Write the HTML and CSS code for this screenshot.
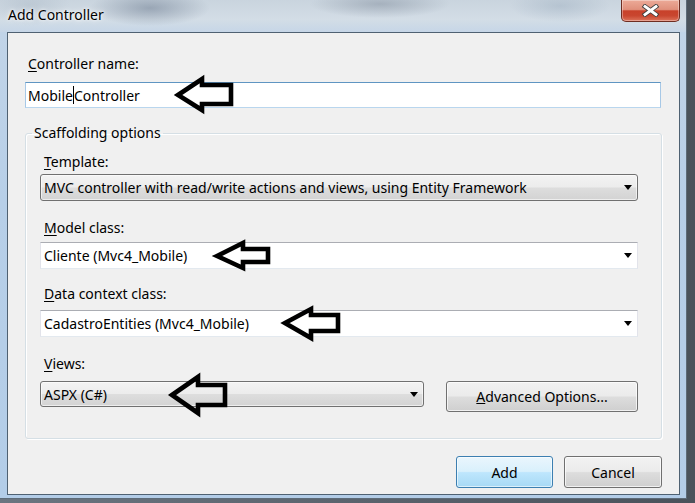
FILE: index.html
```html
<!DOCTYPE html>
<html>
<head>
<meta charset="utf-8">
<link rel="stylesheet" href="styles.css">
</head>
<body>
<div class="window">
  <div class="titlebar">
    <span class="title">Add Controller</span>
    <div class="close">
      <svg width="19" height="13" viewBox="0 0 19 13">
        <path d="M4 2.5 L15 10.5 M15 2.5 L4 10.5" stroke="#3e3e3e" stroke-width="4.6" stroke-linecap="square"/>
        <path d="M4 2.5 L15 10.5 M15 2.5 L4 10.5" stroke="#ffffff" stroke-width="2.8" stroke-linecap="square"/>
      </svg>
    </div>
  </div>
  <div class="client">
    <div class="label top-label"><u>C</u>ontroller name:</div>
    <div class="textbox">Mobile<span class="caret"></span>Controller</div>

    <fieldset class="group">
      <legend>Scaffolding options</legend>

      <div class="label lbl-template"><u>T</u>emplate:</div>
      <div class="combo combo-btn">
        <span>MVC controller with read/write actions and views, using Entity Framework</span>
        <span class="drop"></span>
      </div>

      <div class="label lbl-model"><u>M</u>odel class:</div>
      <div class="combo combo-edit">
        <span>Cliente (Mvc4_Mobile)</span>
        <span class="drop"></span>
      </div>

      <div class="label lbl-data"><u>D</u>ata context class:</div>
      <div class="combo combo-edit">
        <span>CadastroEntities (Mvc4_Mobile)</span>
        <span class="drop"></span>
      </div>

      <div class="label lbl-views"><u>V</u>iews:</div>
      <div class="views-row">
        <div class="combo combo-btn combo-views">
          <span>ASPX (C#)</span>
          <span class="drop"></span>
        </div>
        <div class="button advanced"><u>A</u>dvanced Options...</div>
      </div>
    </fieldset>

    <div class="actions">
      <div class="button default">Add</div>
      <div class="button">Cancel</div>
    </div>
  </div>

  <svg class="arrows" width="687" height="499" viewBox="0 0 687 499">
    <polygon points="178,95 202,79 202,85 231,85 231,104 202,104 202,110"/>
    <polygon points="217,256 243,243 243,249 268,249 268,262 243,262 243,268"/>
    <polygon points="285,323 311,309 311,315 338,315 338,331 311,331 311,338"/>
    <polygon points="172,395 198,377 198,385 225,385 225,405 198,405 198,413"/>
  </svg>
</div>
</body>
</html>
```

FILE: styles.css
```css
* {
  box-sizing: border-box;
}

html, body {
  margin: 0;
  padding: 0;
}

body {
  width: 695px;
  height: 503px;
  overflow: hidden;
  background: linear-gradient(90deg, #6b7580 0%, #4a525b 100%);
  font-family: "Noto Sans", "Open Sans", sans-serif;
  font-size: 14px;
  color: #000;
}

.window {
  position: relative;
  width: 687px;
  height: 499px;
  display: flex;
  flex-direction: column;
  padding: 0 6px 3px 7px;
  background: linear-gradient(180deg, #c3d5e8 0%, #b7cfe8 40%, #b3cde8 100%);
  border-right: 1px solid #5d6b78;
  border-bottom: 1px solid #5d6b78;
}

.titlebar {
  height: 32px;
  margin: 0 -6px 0 -7px;
  padding: 0 6px 0 8px;
  display: flex;
  justify-content: space-between;
  align-items: flex-start;
  background:
    radial-gradient(ellipse 60px 18px at 150px 8px, rgba(110,125,145,0.55), rgba(110,125,145,0) 100%),
    radial-gradient(ellipse 70px 14px at 380px 4px, rgba(120,132,148,0.45), rgba(120,132,148,0) 100%),
    radial-gradient(ellipse 50px 16px at 560px 6px, rgba(140,160,180,0.35), rgba(140,160,180,0) 100%),
    radial-gradient(ellipse 40px 20px at 30px 6px, rgba(160,175,190,0.35), rgba(160,175,190,0) 100%),
    linear-gradient(180deg, #c9d4de 0%, #d3dde6 60%, #c6d6e7 100%);
}

.title {
  padding-top: 6px;
  line-height: 18px;
  text-shadow: 0 0 6px #ffffff, 0 0 3px #ffffff;
}

.close {
  width: 59px;
  height: 22px;
  display: flex;
  align-items: center;
  justify-content: center;
  border: 1px solid #6e2d22;
  border-top: none;
  border-radius: 0 0 5px 5px;
  background: linear-gradient(180deg, #ecaa98 0%, #e0907c 45%, #c8412a 52%, #c9462f 75%, #dc735a 100%);
  box-shadow: inset 0 0 0 1px rgba(255,255,255,0.35);
}

.client {
  flex: 1;
  display: flex;
  flex-direction: column;
  border: 1px solid #4f6172;
  background: #f0f0f0;
  padding: 22px 17px 0 17px;
}

.label {
  line-height: 18px;
  padding-left: 3px;
}

.label u {
  text-decoration-thickness: 1px;
  text-underline-offset: 2px;
}

.top-label {
  margin-bottom: 9px;
}

.textbox {
  height: 26px;
  margin-right: 1px;
  padding-left: 2px;
  display: flex;
  align-items: center;
  background: #ffffff;
  border: 1px solid #a7c8e6;
  border-top-color: #5f95c2;
  border-bottom-color: #b9d6ee;
}

.caret {
  display: inline-block;
  width: 1px;
  height: 18px;
  background: #000;
}

.group {
  margin: 16px 0 0 0;
  padding: 11px 23px 26px 14px;
  border: 1px solid #d5dfe5;
  border-radius: 3px;
  box-shadow: inset 1px 1px 0 #ffffff, 1px 1px 0 #ffffff;
}

.group legend {
  margin-left: -8px;
  padding: 0 2px;
  line-height: 18px;
}

.group .label {
  padding-left: 4px;
}

.lbl-template {
  margin-bottom: 3px;
}

.lbl-model {
  margin-top: 18px;
  margin-bottom: 5px;
}

.lbl-data {
  margin-top: 16px;
  margin-bottom: 7px;
}

.lbl-views {
  margin-top: 18px;
  margin-bottom: 8px;
}

.combo {
  height: 27px;
  display: flex;
  align-items: center;
  justify-content: space-between;
  padding: 0 5px 0 3px;
}

.combo-btn {
  border: 1px solid #707070;
  border-radius: 3px;
  background: linear-gradient(180deg, #f3f3f3 0%, #ececec 48%, #dddddd 52%, #d3d3d3 100%);
  box-shadow: inset 0 0 0 1px rgba(255,255,255,0.6);
}

.combo-edit {
  background: #ffffff;
  border: 1px solid #e2e3ea;
  border-top-color: #abadb3;
  border-bottom-color: #e3e9ef;
}

.drop {
  width: 0;
  height: 0;
  border-left: 4px solid transparent;
  border-right: 4px solid transparent;
  border-top: 5px solid #000;
}

.views-row {
  display: flex;
  align-items: flex-start;
  gap: 22px;
}

.combo-views {
  width: 384px;
  height: 26px;
}

.button {
  display: flex;
  align-items: center;
  justify-content: center;
  border: 1px solid #707070;
  border-radius: 3px;
  background: linear-gradient(180deg, #f2f2f2 0%, #ebebeb 48%, #dddddd 52%, #cfcfcf 100%);
  box-shadow: inset 0 0 0 1px rgba(255,255,255,0.7);
}

.advanced {
  flex: 1;
  height: 31px;
}

.actions {
  margin-top: 17px;
  display: flex;
  justify-content: flex-end;
  gap: 11px;
}

.actions .button {
  width: 97px;
  height: 32px;
}

.actions .button:last-child {
  width: 98px;
}

.button.default {
  border-color: #3c7fb1;
  background: linear-gradient(180deg, #eaf6fd 0%, #d9f0fc 48%, #bee6fd 52%, #a7d9f5 100%);
  box-shadow: inset 0 0 0 1px rgba(255,255,255,0.6);
}

.arrows {
  position: absolute;
  left: 0;
  top: 0;
  pointer-events: none;
}

.arrows polygon {
  fill: none;
  stroke: #000;
  stroke-width: 4.6;
  stroke-linejoin: miter;
}
```
